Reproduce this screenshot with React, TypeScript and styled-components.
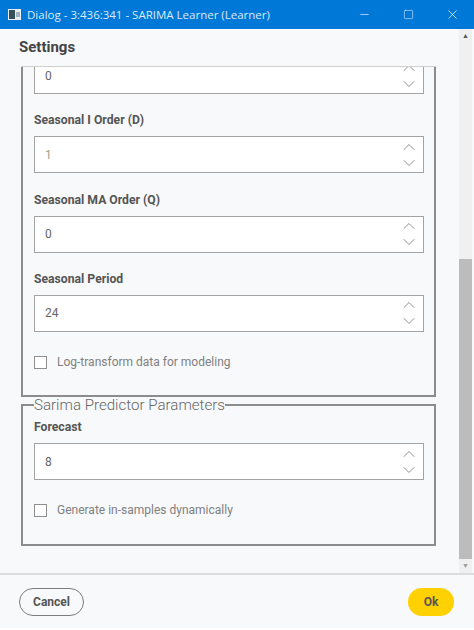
import styled, { createGlobalStyle } from 'styled-components';
import { ChevronDown, ChevronUp, Minus, Square, X } from 'lucide-react';

const GlobalStyle = createGlobalStyle`
    html, body {
        margin: 0;
        padding: 0;
        background: #f8f9fa;
    }
    * {
        box-sizing: border-box;
    }
`;

const Window = styled.div`
    width: 474px;
    height: 630px;
    display: flex;
    flex-direction: column;
    overflow: hidden;
    font-family: Roboto, "Liberation Sans", sans-serif;
    background: #f8f9fa;
`;

const TitleBar = styled.div`
    height: 29px;
    flex: none;
    display: flex;
    align-items: center;
    background: #0078d7;
    color: #fff;
    padding-left: 8px;
`;

const TitleText = styled.span`
    margin-left: 6px;
    font-family: "Open Sans", "Noto Sans", sans-serif;
    font-size: 11.5px;
    color: #dcebf8;
    flex: 1;
`;

const WindowButton = styled.span`
    width: 44px;
    height: 29px;
    display: flex;
    align-items: center;
    justify-content: center;
    color: #f2f8fd;
`;

const Main = styled.div`
    height: 544px;
    flex: none;
    display: flex;
`;

const Content = styled.div`
    flex: 1;
    min-width: 0;
    display: flex;
    flex-direction: column;
`;

const Heading = styled.h1`
    height: 37px;
    flex: none;
    margin: 0;
    padding: 9px 0 0 19px;
    font-size: 15px;
    line-height: 18px;
    font-weight: 700;
    color: #444;
`;

const ScrollArea = styled.div`
    flex: 1;
    overflow: hidden;
    margin: 0 23px 0 21px;
    border-top: 1px solid #cfcfcf;
`;

/* stands in for the scroll offset of the real page */
const Scrolled = styled.div`
    margin-top: -37px;
`;

const Group = styled.fieldset`
    margin: 0;
    padding: 0 10px 0 11px;
    border: 2px solid #8c8c8c;
    height: ${(p: { $height: number }) => p.$height}px;
`;

const Legend = styled.legend`
    padding: 0;
    margin-bottom: 5px;
    font-size: 15.1px;
    line-height: 16px;
    font-weight: 300;
    color: #666;
`;

const Field = styled.div`
    height: 79.3px;
`;

const FieldLabel = styled.label`
    display: block;
    height: 25px;
    padding-top: 1px;
    font-size: 12.2px;
    line-height: 16px;
    font-weight: 700;
    color: #555;
`;

const NumberBox = styled.div`
    height: 37px;
    display: flex;
    align-items: center;
    justify-content: space-between;
    padding: 0 4px 0 10px;
    background: #fff;
    border: 1px solid #a3a3a3;
    font-size: 12px;
    color: ${(p: { $faint?: boolean }) => (p.$faint ? '#a89f88' : '#666')};
`;

const Stepper = styled.div`
    display: flex;
    flex-direction: column;
    gap: 0;
    color: #8f8f8f;

    svg + svg {
        margin-top: -4px;
    }
`;

const CheckRow = styled.div`
    display: flex;
    align-items: center;
    gap: 10px;
    height: 14px;
    margin-top: 6px;
    font-size: 12px;
    color: #808080;
`;

const Box = styled.span`
    width: 13px;
    height: 13px;
    background: #fff;
    border: 1px solid #8f8f8f;
`;

const Scrollbar = styled.div`
    width: 13px;
    margin-right: 2px;
    flex: none;
    display: flex;
    flex-direction: column;
    align-items: center;
    background: #f0f0f0;
`;

const Arrow = styled.span`
    height: 14px;
    flex: none;
    display: flex;
    align-items: center;
    justify-content: center;
    color: ${(p: { $dim?: boolean }) => (p.$dim ? '#9a9a9a' : '#555')};
    font-size: 7px;
`;

const Track = styled.div`
    flex: 1;
    width: 100%;
    display: flex;
    flex-direction: column;
    justify-content: flex-end;
`;

const Thumb = styled.div`
    height: 300px;
    background: #bcbcbc;
`;

const Footer = styled.div`
    height: 55px;
    flex: none;
    display: flex;
    align-items: center;
    justify-content: space-between;
    padding: 0 20px 0 19px;
    border-top: 2px solid #dcdddf;
`;

const Pill = styled.button`
    height: 28px;
    padding: 0;
    border-radius: 14px;
    font-family: inherit;
    font-size: 12px;
    font-weight: 700;
    color: #555;
    background: ${(p: { $primary?: boolean }) => (p.$primary ? '#ffd100' : 'transparent')};
    border: ${(p: { $primary?: boolean }) => (p.$primary ? 'none' : '1.5px solid #7d7d7d')};
    width: ${(p: { $primary?: boolean }) => (p.$primary ? '46px' : '65px')};
`;

const BottomEdge = styled.div`
    height: 2px;
    flex: none;
    background: #fff;
`;

function AppIcon() {
    return (
        <svg width="13" height="11" viewBox="0 0 13 11">
            <rect width="13" height="11" fill="#e8eef2" />
            <rect x="1" y="1" width="6" height="9" fill="#33505c" />
            <rect x="8" y="3" width="4" height="5" fill="#9fb4bd" />
        </svg>
    );
}

interface NumberFieldProps {
    label?: string;
    value: string;
    faint?: boolean;
}

function NumberField({ label, value, faint }: NumberFieldProps) {
    return (
        <Field>
            <FieldLabel>{label}</FieldLabel>
            <NumberBox $faint={faint}>
                {value}
                <Stepper>
                    <ChevronUp size={20} strokeWidth={1.2} />
                    <ChevronDown size={20} strokeWidth={1.2} />
                </Stepper>
            </NumberBox>
        </Field>
    );
}

export default function App() {
    return (
        <Window>
            <GlobalStyle />
            <TitleBar>
                <AppIcon />
                <TitleText>Dialog - 3:436:341 - SARIMA Learner (Learner)</TitleText>
                <WindowButton><Minus size={13} strokeWidth={1.2} /></WindowButton>
                <WindowButton><Square size={11} strokeWidth={1.2} /></WindowButton>
                <WindowButton><X size={15} strokeWidth={1.2} /></WindowButton>
            </TitleBar>
            <Main>
                <Content>
                    <Heading>Settings</Heading>
                    <ScrollArea>
                        <Scrolled>
                            <Group $height={367}>
                                <NumberField value="0" />
                                <NumberField label="Seasonal I Order (D)" value="1" faint />
                                <NumberField label="Seasonal MA Order (Q)" value="0" />
                                <NumberField label="Seasonal Period" value="24" />
                                <CheckRow><Box />Log-transform data for modeling</CheckRow>
                            </Group>
                            <Group $height={149}>
                                <Legend>Sarima Predictor Parameters</Legend>
                                <NumberField label="Forecast" value="8" />
                                <CheckRow><Box />Generate in-samples dynamically</CheckRow>
                            </Group>
                        </Scrolled>
                    </ScrollArea>
                </Content>
                <Scrollbar>
                    <Arrow>▲</Arrow>
                    <Track><Thumb /></Track>
                    <Arrow $dim>▼</Arrow>
                </Scrollbar>
            </Main>
            <Footer>
                <Pill>Cancel</Pill>
                <Pill $primary>Ok</Pill>
            </Footer>
            <BottomEdge />
        </Window>
    );
}
